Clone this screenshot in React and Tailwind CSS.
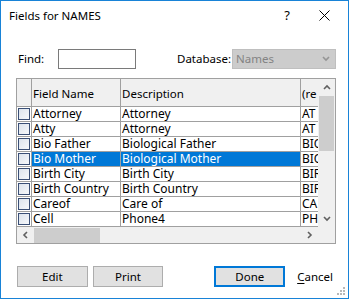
import React from "react";

const rows = [
  ["Attorney", "Attorney", "AT"],
  ["Atty", "Attorney", "AT"],
  ["Bio Father", "Biological Father", "BIO"],
  ["Bio Mother", "Biological Mother", "BIO"],
  ["Birth City", "Birth City", "BIR"],
  ["Birth Country", "Birth Country", "BIR"],
  ["Careof", "Care of", "CA"],
  ["Cell", "Phone4", "PH"],
];

function Chevron({ dir, className }) {
  const paths = {
    up: "M1 5 L4 2 L7 5",
    down: "M1 2 L4 5 L7 2",
    left: "M5 1 L2 4 L5 7",
    right: "M2 1 L5 4 L2 7",
  };
  return (
    <svg width="8" height="8" viewBox="0 0 8 8" className={className}>
      <path d={paths[dir]} fill="none" stroke="#606060" strokeWidth="1.6" />
    </svg>
  );
}

export default function App() {
  return (
    <div
      className="relative w-[349px] h-[299px] border border-[#1883d7] bg-white text-[11.5px] text-black overflow-hidden"
      style={{ fontFamily: '"Segoe UI", "Noto Sans", "Liberation Sans", sans-serif' }}
    >
      {/* Title bar */}
      <div className="h-[29px] flex items-center pl-[8px]">
        <span className="text-[11.5px] leading-none">Fields for NAMES</span>
        <span className="ml-auto mr-[29px] text-[13px] leading-none">?</span>
        <svg width="11" height="11" viewBox="0 0 11 11" className="mr-[18px]">
          <path d="M0.5 0.5 L10.5 10.5 M10.5 0.5 L0.5 10.5" stroke="#000" strokeWidth="1" />
        </svg>
      </div>

      <div className="px-[15px]">
        {/* Find row */}
        <div className="mt-[19px] flex items-center h-[20px]">
          <span className="ml-[2px] w-[40px] shrink-0">Find:</span>
          <div className="w-[78px] h-[20px] shrink-0 border border-[#7a7a7a] bg-white" />
          <span className="ml-[41px] w-[55px] shrink-0 whitespace-nowrap">Database:</span>
          <div className="w-[104px] h-[20px] shrink-0 border border-[#bfbfbf] bg-[#cccccc] flex items-center pl-[3px] text-[#838383]">
            <span>Names</span>
            <Chevron dir="down" className="ml-auto mr-[5px] opacity-50" />
          </div>
        </div>

        {/* Grid */}
        <div className="mt-[9px] w-[320px] h-[166px] border border-[#a0a0a0] flex flex-col bg-white">
          <div className="flex h-[148px]">
            <div className="w-[301px] flex flex-col">
              {/* header */}
              <div className="h-[28px] flex bg-[#f0f0f0] border-b border-[#a0a0a0]">
                <div className="w-[15px] border-r border-[#a0a0a0]" />
                <div className="w-[89px] border-r border-[#a0a0a0] flex items-center pl-[1px] pt-[2px]">Field Name</div>
                <div className="w-[180px] border-r border-[#a0a0a0] flex items-center pl-[1px] pt-[2px]">Description</div>
                <div className="w-[17px] flex items-center pl-[1px] pt-[2px] overflow-hidden whitespace-nowrap">(re</div>
              </div>
              {rows.map((r, i) => {
                const sel = i === 3;
                return (
                  <div key={i} className="h-[15px] flex border-b border-[#a0a0a0] leading-[14px] text-[12px]">
                    <div className="w-[15px] border-r border-[#a0a0a0] flex items-center justify-center">
                      <div className="w-[12px] h-[12px] border border-[#3a4f76] bg-gradient-to-br from-[#dce3ec] to-[#f6f8fb]" />
                    </div>
                    <div className={`w-[89px] border-r border-[#a0a0a0] pl-[1px] whitespace-nowrap overflow-hidden ${sel ? "bg-[#0078d7] text-white" : ""}`}>{r[0]}</div>
                    <div className={`w-[180px] border-r border-[#a0a0a0] pl-[1px] whitespace-nowrap overflow-hidden ${sel ? "bg-[#0078d7] text-white" : ""}`}>{r[1]}</div>
                    <div className="w-[17px] pl-[1px] whitespace-nowrap overflow-hidden">{r[2]}</div>
                  </div>
                );
              })}
            </div>
            {/* vertical scrollbar */}
            <div className="w-[17px] bg-[#f0f0f0] flex flex-col items-center">
              <div className="h-[17px] flex items-center justify-center">
                <Chevron dir="up" />
              </div>
              <div className="w-[15px] h-[55px] bg-[#cdcdcd]" />
              <div className="mt-auto h-[17px] flex items-center justify-center">
                <Chevron dir="down" />
              </div>
            </div>
          </div>
          {/* horizontal scrollbar */}
          <div className="flex h-[16px] bg-[#f0f0f0]">
            <div className="w-[301px] flex items-center">
              <div className="w-[17px] flex items-center justify-center">
                <Chevron dir="left" />
              </div>
              <div className="w-[66px] h-[15px] bg-[#cdcdcd]" />
              <div className="ml-auto w-[17px] flex items-center justify-center">
                <Chevron dir="right" />
              </div>
            </div>
            <div className="w-[17px]" />
          </div>
        </div>

        {/* Buttons */}
        <div className="mt-[22px] flex items-center">
          <div className="ml-[1px] w-[73px] h-[21px] border border-[#adadad] bg-[#e1e1e1] flex items-center justify-center">Edit</div>
          <div className="ml-[5px] w-[73px] h-[21px] border border-[#adadad] bg-[#e1e1e1] flex items-center justify-center">Print</div>
          <div className="ml-[51px] w-[73px] h-[21px] border-2 border-[#0078d7] bg-[#e1e1e1] flex items-center justify-center">Done</div>
          <div className="ml-[12px]">
            <span className="underline underline-offset-2">C</span>ancel
          </div>
        </div>
      </div>

      {/* size grip */}
      <svg width="8" height="8" viewBox="0 0 8 8" className="absolute right-[3px] bottom-[3px]">
        {[[6, 0], [6, 3], [3, 3], [6, 6], [3, 6], [0, 6]].map(([x, y], i) => (
          <rect key={i} x={x} y={y} width="2" height="2" fill="#b8b8b8" />
        ))}
      </svg>
    </div>
  );
}
